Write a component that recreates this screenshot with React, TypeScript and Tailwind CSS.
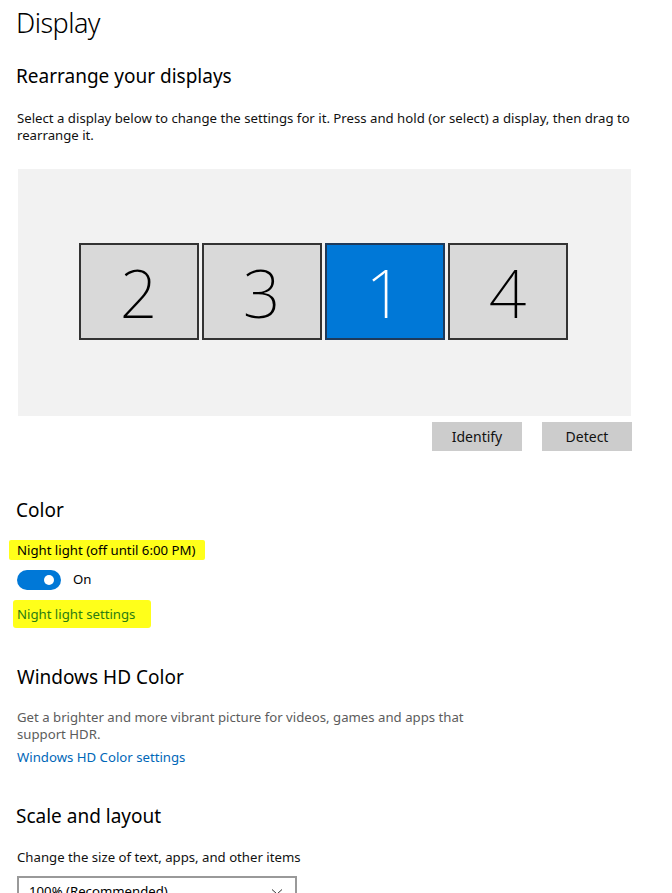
import React from "react";

const font = { fontFamily: '"Segoe UI", "Noto Sans", "Open Sans", sans-serif' };

function Monitor({ n, active }: { n: string; active?: boolean }) {
  return (
    <div
      className={`w-[120px] h-[97px] border-2 flex items-center justify-center ${
        active ? "bg-[#0078d7] text-white border-[#1f3a5a]" : "bg-[#d9d9d9] text-black border-[#333333]"
      }`}
    >
      <span className="text-[66px] font-extralight leading-none" style={font}>
        {n}
      </span>
    </div>
  );
}

export default function App() {
  return (
    <div className="w-[672px] h-[893px] bg-white overflow-hidden text-black relative" style={font}>
      <div className="pl-[16px]">
        <h1 className="text-[27px] tracking-[-0.02em] font-light leading-none pt-[9px]">Display</h1>
        <h2 className="text-[19px] leading-none mt-[31px]">Rearrange your displays</h2>
        <p className="text-[13.2px] leading-[17px] mt-[24px] pl-[1px] pr-[20px] text-[#111]">
          Select a display below to change the settings for it. Press and hold (or select) a display, then drag to
          rearrange it.
        </p>
        <div className="ml-[2px] mt-[25px] w-[613px] h-[247px] bg-[#f2f2f2] flex items-center justify-center">
          <div className="flex gap-[3px] pr-[3px] pb-[2px]">
            <Monitor n="2" />
            <Monitor n="3" />
            <Monitor n="1" active />
            <Monitor n="4" />
          </div>
        </div>
        <div className="w-[616px] flex justify-end gap-[20px] mt-[6px]">
          <button className="w-[90px] h-[29px] bg-[#cccccc] text-[14px] text-[#111]">Identify</button>
          <button className="w-[90px] h-[29px] bg-[#cccccc] text-[14px] text-[#111]">Detect</button>
        </div>

        <h2 className="text-[19px] leading-none mt-[50px]">Color</h2>
        <div className="mt-[17px] -ml-[7px]">
          <span className="inline-block bg-[#ffff1a] pl-[8px] pr-[10px] h-[20px] leading-[20px] text-[13.2px] rounded-[2px] text-black">
            Night light (off until 6:00 PM)
          </span>
        </div>
        <div className="flex items-center mt-[9px] ml-[1px]">
          <div className="w-[44px] h-[20px] rounded-full bg-[#0078d7] relative">
            <div className="absolute right-[7px] top-[5px] w-[10px] h-[10px] rounded-full bg-white" />
          </div>
          <span className="text-[13.2px] ml-[12px]">On</span>
        </div>
        <div className="mt-[10px] -ml-[3px]">
          <span className="inline-block bg-[#ffff1a] pl-[4px] pr-[16px] pt-[2px] h-[28px] leading-[24px] text-[13.2px] text-[#2a7d12] rounded-[3px]">
            Night light settings
          </span>
        </div>

        <h2 className="text-[19px] leading-none mt-[40px] ml-[1px]">Windows HD Color</h2>
        <p className="text-[13.2px] leading-[17px] mt-[22px] ml-[1px] w-[460px] text-[#5c5c5c]">
          Get a brighter and more vibrant picture for videos, games and apps that support HDR.
        </p>
        <a className="block text-[13.2px] leading-[17px] mt-[6px] ml-[1px] text-[#0067b8]">
          Windows HD Color settings
        </a>

        <h2 className="text-[19px] leading-none mt-[41px]">Scale and layout</h2>
        <p className="text-[13.2px] leading-[17px] mt-[23px] ml-[1px] text-[#111]">
          Change the size of text, apps, and other items
        </p>
        <div className="mt-[10px] ml-[1px] w-[280px] h-[32px] border-2 border-[#999999] flex items-center justify-between px-[10px]">
          <span className="text-[13.2px]">100% (Recommended)</span>
          <svg width="12" height="8" viewBox="0 0 12 8" className="mr-[2px]">
            <path d="M1 1.5 L6 6 L11 1.5" fill="none" stroke="#333" strokeWidth="1" />
          </svg>
        </div>
      </div>
    </div>
  );
}
